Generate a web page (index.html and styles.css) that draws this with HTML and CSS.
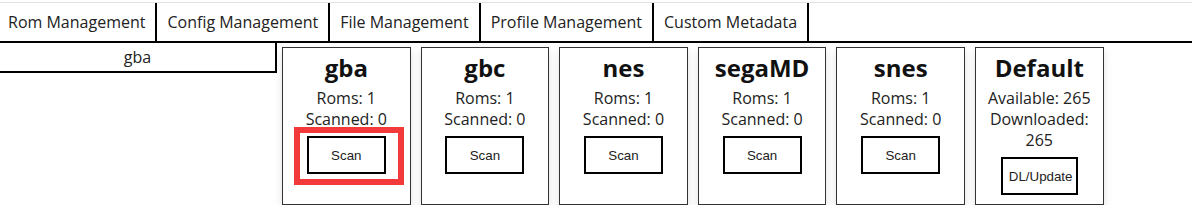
FILE: index.html
```html
<!DOCTYPE html>
<html lang="en">
<head>
    <meta charset="UTF-8">
    <meta name="viewport" content="width=device-width, initial-scale=1.0">
    <title>Rom Management</title>
    <link rel="stylesheet" href="styles.css">
</head>
<body>
    <div class="tabs">
        <div class="tab">Rom Management</div>
        <div class="tab">Config Management</div>
        <div class="tab">File Management</div>
        <div class="tab">Profile Management</div>
        <div class="tab">Custom Metadata</div>
    </div>

    <div class="main">
        <div class="sidebar">gba</div>

        <div class="cards">
            <div class="card">
                <div class="card-title">gba</div>
                <div class="card-line">Roms: 1</div>
                <div class="card-line">Scanned: 0</div>
                <div class="btn-wrap">
                    <button class="scan-btn">Scan</button>
                    <div class="highlight"></div>
                </div>
            </div>
            <div class="card">
                <div class="card-title">gbc</div>
                <div class="card-line">Roms: 1</div>
                <div class="card-line">Scanned: 0</div>
                <div class="btn-wrap"><button class="scan-btn">Scan</button></div>
            </div>
            <div class="card">
                <div class="card-title">nes</div>
                <div class="card-line">Roms: 1</div>
                <div class="card-line">Scanned: 0</div>
                <div class="btn-wrap"><button class="scan-btn">Scan</button></div>
            </div>
            <div class="card">
                <div class="card-title">segaMD</div>
                <div class="card-line">Roms: 1</div>
                <div class="card-line">Scanned: 0</div>
                <div class="btn-wrap"><button class="scan-btn">Scan</button></div>
            </div>
            <div class="card">
                <div class="card-title">snes</div>
                <div class="card-line">Roms: 1</div>
                <div class="card-line">Scanned: 0</div>
                <div class="btn-wrap"><button class="scan-btn">Scan</button></div>
            </div>
            <div class="card">
                <div class="card-title">Default</div>
                <div class="card-line">Available: 265</div>
                <div class="card-line">Downloaded: 265</div>
                <div class="btn-wrap"><button class="dl-btn">DL/Update</button></div>
            </div>
        </div>
    </div>
</body>
</html>
```

FILE: styles.css
```css
body {
    font-family: "Open Sans", "Noto Sans", sans-serif;
    margin: 0;
    padding: 0;
    background: white;
    color: #111;
}
.tabs {
    display: flex;
    margin-top: 2px;
    border-top: 1px solid #e3e3e3;
    border-bottom: 2px solid #000;
}
.tab {
    height: 38px;
    line-height: 38px;
    padding: 0 10px;
    font-size: 16px;
    color: #222;
    border-right: 2px solid #000;
    white-space: nowrap;
}
.tab:first-child {
    padding-left: 8px;
}
.main {
    display: flex;
    align-items: flex-start;
}
.sidebar {
    width: 275px;
    height: 28px;
    line-height: 28px;
    text-align: center;
    font-size: 16px;
    color: #222;
    border-right: 2px solid #000;
    border-bottom: 2px solid #000;
}
.cards {
    display: flex;
    gap: 10px;
    margin-left: 5px;
    margin-top: 4px;
}
.card {
    box-sizing: border-box;
    width: 128.6px;
    height: 158px;
    padding-top: 4px;
    border: 1px solid #333;
    background: white;
    text-align: center;
    box-shadow: 0 4px 8px rgba(0, 0, 0, 0.12);
}
.card-title {
    font-size: 24px;
    font-weight: bold;
    line-height: 32px;
    margin-bottom: 4px;
}
.card-line {
    font-size: 16px;
    line-height: 21px;
    color: #222;
}
.btn-wrap {
    position: relative;
    display: inline-block;
    margin-top: 6px;
}
button {
    font-family: "Liberation Sans", Arial, sans-serif;
    font-size: 13.33px;
    color: #222;
    height: 38px;
    padding: 0 6px;
    background: white;
    border: 2px solid #000;
    display: block;
}
.scan-btn {
    width: 79px;
}
.dl-btn {
    width: 77px;
}
.highlight {
    position: absolute;
    left: -13px;
    top: -9px;
    width: 110px;
    height: 58px;
    box-sizing: border-box;
    border: 6px solid #f23a3a;
}
```
